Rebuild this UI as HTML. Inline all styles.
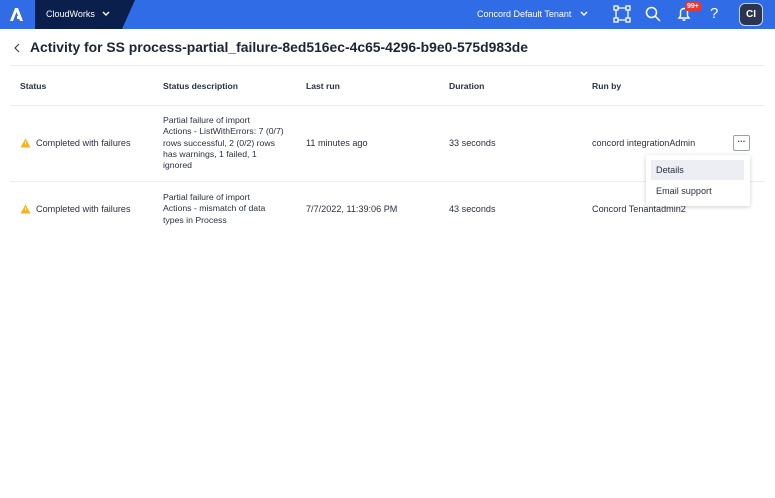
<!DOCTYPE html>
<html><head><style>
*{margin:0;padding:0;box-sizing:border-box}
body{width:775px;height:498px;background:#fff;font-family:"Liberation Sans",sans-serif;color:#1d2433;position:relative;overflow:hidden}
.hdr{position:absolute;top:0;left:0;width:775px;height:29px;background:#2f6ce5}
.abs{position:absolute}
.t{position:absolute;font-size:8.7px;line-height:11.3px;color:#2a3040}
.s{font-size:9.1px}
.th{position:absolute;font-size:8.6px;font-weight:bold;top:81px;color:#2a3040}
.line{position:absolute;left:10px;width:755px;height:1px;background:#ececf0}
</style></head><body>
<div class="hdr"></div>
<svg class="abs" style="left:35px;top:0" width="100" height="29"><polygon points="0,0 100,0 87,29 0,29" fill="#0b1f4d"/></svg>
<svg class="abs" style="left:9px;top:7px" width="16" height="15"><path d="M1 14 L6 1 L9 1 L14 14 L11 14 L7.5 5 L4 14Z M8 9 h3 v3 h-3z" fill="#fff"/></svg>
<div class="abs" style="left:46px;top:9px;font-size:9px;color:#fff">CloudWorks</div>
<svg class="abs" style="left:102px;top:11px" width="8" height="6"><path d="M1 1 L4 4 L7 1" stroke="#fff" stroke-width="1.4" fill="none"/></svg>
<div class="abs" style="left:477px;top:9px;font-size:9px;color:#fff">Concord Default Tenant</div>
<svg class="abs" style="left:580px;top:11px" width="8" height="6"><path d="M1 1 L4 4 L7 1" stroke="#fff" stroke-width="1.4" fill="none"/></svg>
<svg class="abs" style="left:613px;top:5px" width="18" height="18" fill="none" stroke="#fff" stroke-width="1.3"><rect x="1" y="1" width="4" height="4"/><rect x="13" y="1" width="4" height="4"/><rect x="1" y="13" width="4" height="4"/><rect x="13" y="13" width="4" height="4"/><path d="M5 3h8M5 15h8M3 5v8M15 5v8"/></svg>
<svg class="abs" style="left:645px;top:6px" width="16" height="16" fill="none" stroke="#fff" stroke-width="1.5"><circle cx="6.5" cy="6.5" r="5"/><path d="M10 10l5 5"/></svg>
<svg class="abs" style="left:677px;top:6px" width="14" height="16" fill="none" stroke="#fff" stroke-width="1.4"><path d="M2 12h10l-1.5-2V6a3.5 3.5 0 0 0-7 0v4z M5.5 14h3"/></svg>
<div class="abs" style="left:685px;top:2px;background:#e53935;color:#fff;font-size:7px;font-weight:bold;padding:0 2px;line-height:9px;border-radius:2px">99+</div>
<div class="abs" style="left:710px;top:5px;font-size:15px;color:#fff">?</div>
<div class="abs" style="left:739px;top:3px;width:24px;height:23px;border:1.5px solid #c8d4ee;border-radius:6px;background:#2b3550;color:#fff;font-size:10px;font-weight:bold;text-align:center;line-height:21px">CI</div>
<svg class="abs" style="left:13px;top:43px" width="8" height="10"><path d="M6 1L2 5l4 4" stroke="#444" stroke-width="1.2" fill="none"/></svg>
<div class="abs" style="left:30px;top:39px;font-size:13.9px;font-weight:bold;color:#1d2433">Activity for SS process-partial_failure-8ed516ec-4c65-4296-b9e0-575d983de</div>
<div class="line" style="top:65px"></div>
<div class="th" style="left:20px">Status</div>
<div class="th" style="left:163px">Status description</div>
<div class="th" style="left:306px">Last run</div>
<div class="th" style="left:449px">Duration</div>
<div class="th" style="left:592px">Run by</div>
<div class="line" style="top:105px"></div>
<svg class="abs" style="left:20px;top:138px" width="11" height="10"><path d="M5.5 0.5L10.5 9.5H0.5Z" fill="#f4b31f"/><path d="M5.5 3.5v3" stroke="#fff" stroke-width="1"/></svg>
<div class="t s" style="left:36px;top:138px">Completed with failures</div>
<div class="t" style="left:163px;top:115px">Partial failure of import<br>Actions - ListWithErrors: 7 (0/7)<br>rows successful, 2 (0/2) rows<br>has warnings, 1 failed, 1<br>ignored</div>
<div class="t s" style="left:306px;top:138px">11 minutes ago</div>
<div class="t s" style="left:449px;top:138px">33 seconds</div>
<div class="t s" style="left:592px;top:138px">concord integrationAdmin</div>
<div class="abs" style="left:733px;top:135px;width:17px;height:16px;border:1px solid #9aa0ac;border-radius:2px;font-size:8px;text-align:center;line-height:11px;font-weight:bold">···</div>
<div class="line" style="top:181px"></div>
<svg class="abs" style="left:20px;top:204px" width="11" height="10"><path d="M5.5 0.5L10.5 9.5H0.5Z" fill="#f4b31f"/><path d="M5.5 3.5v3" stroke="#fff" stroke-width="1"/></svg>
<div class="t s" style="left:36px;top:204px">Completed with failures</div>
<div class="t" style="left:163px;top:192px">Partial failure of import<br>Actions - mismatch of data<br>types in Process</div>
<div class="t s" style="left:306px;top:204px">7/7/2022, 11:39:06 PM</div>
<div class="t s" style="left:449px;top:204px">43 seconds</div>
<div class="t s" style="left:592px;top:204px">Concord Tenantadmin2</div>
<div class="abs" style="left:646px;top:155px;width:104px;height:51px;background:#fff;box-shadow:0 1px 4px rgba(0,0,0,.2);border-radius:2px"></div>
<div class="abs" style="left:651px;top:160px;width:93px;height:20px;background:#eceef3"></div>
<div class="t s" style="left:656px;top:165px">Details</div>
<div class="t s" style="left:656px;top:186px">Email support</div>
</body></html>
